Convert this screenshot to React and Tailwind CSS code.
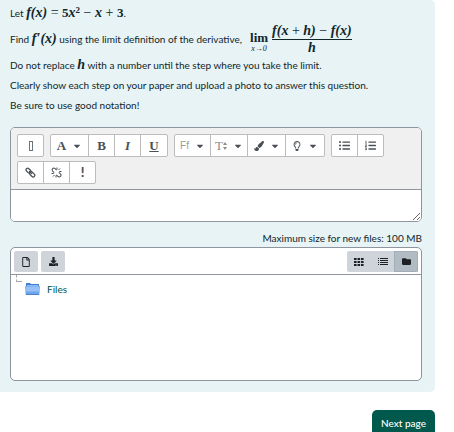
import React from 'react';
import { clsx } from 'clsx';
import {
  FaCaretDown,
  FaDownload,
  FaFolder,
  FaListOl,
  FaListUl,
  FaPaintBrush,
  FaRegFile,
  FaRegLightbulb,
} from 'react-icons/fa';

const Tex = ({ children, className }) => (
  <span
    className={clsx(
      "font-['Liberation_Serif',serif] whitespace-nowrap text-[#10262b]",
      className || 'text-[14px] leading-4 font-bold italic'
    )}
  >
    {children}
  </span>
);

const Up = ({ children }) => (
  <span className="not-italic font-normal">{children}</span>
);

const Group = ({ children }) => (
  <div className="flex h-[23px] rounded-xs border border-[#bcbcbc] bg-white divide-x divide-[#bcbcbc] overflow-hidden">
    {children}
  </div>
);

const Tool = ({ label, menu, className, children }) => (
  <button
    type="button"
    aria-label={label}
    className={clsx(
      'flex items-center justify-center gap-1.5 text-[#495057]',
      className || 'w-[26px]'
    )}
  >
    {children}
    {menu && <FaCaretDown size={10} />}
  </button>
);

const Letter = ({ children, className }) => (
  <span
    className={clsx(
      "font-['Liberation_Serif',serif] text-[13px] leading-4",
      className
    )}
  >
    {children}
  </span>
);

const ChainIcon = () => (
  <svg
    width="11"
    height="11"
    viewBox="0 0 22 22"
    fill="none"
    stroke="currentColor"
    strokeWidth="2.5"
    aria-hidden="true"
  >
    <g transform="rotate(45 11 11)">
      <rect x="0" y="8" width="11" height="6.500" rx="3.250" />
      <rect x="10" y="8" width="12" height="6.500" rx="3.250" />
      <path d="M7 11h8" />
    </g>
  </svg>
);

const BrokenChainIcon = () => (
  <svg
    width="11"
    height="11"
    viewBox="0 0 22 22"
    fill="none"
    stroke="currentColor"
    strokeWidth="2"
    aria-hidden="true"
  >
    <g transform="rotate(45 11 11)">
      <path d="M8 7.500H3.500a3.500 3.500 0 0 0 0 7H8M14 7.500h4.500a3.500 3.500 0 0 1 0 7H14" />
    </g>
    <path d="M12 5V1M15 6l3-3M16.500 9H21M10 17v4M7 16l-3 3M5.500 13H1" />
  </svg>
);

const GridIcon = () => (
  <svg width="10" height="8" viewBox="0 0 10 8" fill="currentColor">
    <path d="M0 0h2.600v2H0zM3.500 0h2.600v2H3.500zM7 0h2.600v2H7zM0 3h2.600v2H0zM3.500 3h2.600v2H3.500zM7 3h2.600v2H7zM0 6h2.600v2H0zM3.500 6h2.600v2H3.500zM7 6h2.600v2H7z" />
  </svg>
);

const RowsIcon = () => (
  <svg width="10" height="8" viewBox="0 0 10 8" fill="currentColor">
    <path d="M0 0h1v1H0zM2 0h8v1H2zM0 2h1v1H0zM2 2h8v1H2zM0 4h1v1H0zM2 4h8v1H2zM0 6h1v1H0zM2 6h8v1H2z" />
  </svg>
);

const FolderIcon = () => (
  <svg width="15" height="14" viewBox="0 0 15 14" aria-hidden="true">
    <path d="M1 5V1.500Q1 1 1.500 1H5l1 1h7.500l.5.500V5z" fill="#3f7ed0" />
    <path d="M2 3h11v2H2z" fill="#8fbdf2" />
    <path d="M0 4h15l-.700 9H.700z" fill="#6ea6ec" />
    <path d="M.500 4.500h14l-.400 5H.900z" fill="#98c2f7" />
    <path d="M1 12.500h13" stroke="#4b83cd" />
  </svg>
);

const Question = () => (
  <div className="text-[10px] leading-5 text-[#10262b]">
    <p>
      Let{' '}
      <Tex>
        f(x) <Up>=</Up> <span className="not-italic text-[13px]">5</span>x
        <sup className="not-italic text-[9px] leading-none">2</sup> <Up>−</Up> x{' '}
        <Up>+</Up> <span className="not-italic text-[13px]">3</span>
      </Tex>
      .
    </p>
    <div className="flex h-8 items-center whitespace-nowrap">
      <span>
        Find <Tex>f′(x)</Tex> using the limit definition of the derivative,
      </span>
      <span className="ml-2 mt-2 flex flex-col items-center">
        <Tex className="text-[13px] leading-3 font-bold">lim</Tex>
        <Tex className="text-[8px] leading-[10px] italic">x→0</Tex>
      </span>
      <span className="ml-1 flex flex-col items-center">
        <Tex className="border-b border-[#10262b] text-[14px] leading-4 font-bold italic">
          f(x <Up>+</Up> h) <Up>−</Up> f(x)
        </Tex>
        <Tex className="text-[14px] leading-[15px] font-bold italic">h</Tex>
      </span>
    </div>
    <p>
      Do not replace <Tex>h</Tex> with a number until the step where you take
      the limit.
    </p>
    <p>
      Clearly show each step on your paper and upload a photo to answer this
      question.
    </p>
    <p>Be sure to use good notation!</p>
  </div>
);

const Editor = () => (
  <div className="mt-3 overflow-hidden rounded-[5px] border border-[#8f959e] bg-white">
    <div className="flex flex-wrap gap-x-1.5 gap-y-1 border-b border-[#8f959e] bg-[#f0f0f0] px-1.5 pt-1.5 pb-[5px]">
      <Group>
        <Tool label="Show more buttons" className="w-[25px]">
          <span className="h-2.5 w-1 border border-[#6c757d]" />
        </Tool>
      </Group>
      <Group>
        <Tool label="Paragraph styles" menu className="w-[38px]">
          <Letter className="font-bold">A</Letter>
        </Tool>
        <Tool label="Bold">
          <Letter className="font-bold">B</Letter>
        </Tool>
        <Tool label="Italic">
          <Letter className="font-bold italic">I</Letter>
        </Tool>
        <Tool label="Underline">
          <Letter className="font-bold underline">U</Letter>
        </Tool>
      </Group>
      <Group>
        <Tool label="Font family" menu className="w-9">
          <span className="font-['Liberation_Sans',sans-serif] text-[10px] text-[#9a9a9a]">
            Ff
          </span>
        </Tool>
        <Tool label="Font size" menu className="w-[37px]">
          <span className="flex items-center text-[#8c8c8c]">
            <Letter>T</Letter>
            <svg width="4" height="10" viewBox="0 0 4 10" fill="currentColor">
              <path d="M2 1l2 3H0zM2 9l2-3H0z" />
            </svg>
          </span>
        </Tool>
        <Tool label="Font colour" menu className="w-[38px]">
          <FaPaintBrush size={10} />
        </Tool>
        <Tool label="Background colour" menu className="w-[38px]">
          <FaRegLightbulb size={10} />
        </Tool>
      </Group>
      <Group>
        <Tool label="Unordered list">
          <FaListUl size={11} />
        </Tool>
        <Tool label="Ordered list" className="w-[25px]">
          <FaListOl size={11} />
        </Tool>
      </Group>
      <Group>
        <Tool label="Link">
          <ChainIcon />
        </Tool>
        <Tool label="Unlink">
          <BrokenChainIcon />
        </Tool>
        <Tool label="Prevent automatic linking" className="w-[25px]">
          <span className="text-[13px] font-black">!</span>
        </Tool>
      </Group>
    </div>
    <textarea
      aria-label="Answer text"
      className="block h-[31px] w-full resize-y bg-white px-1.5 text-[10px] outline-none"
    />
  </div>
);

const FileManager = () => (
  <div className="overflow-hidden rounded-[5px] border border-[#8f959e] bg-white">
    <div className="flex justify-between border-b border-[#8f959e] px-[3px] pt-[3px] pb-0.5 text-[#1d2125]">
      <div className="flex gap-[3px]">
        <button
          type="button"
          aria-label="Add file"
          className="flex h-[21px] w-6 items-center justify-center rounded-xs bg-[#ced4da]"
        >
          <FaRegFile size={10} />
        </button>
        <button
          type="button"
          aria-label="Download all"
          className="flex h-[21px] w-6 items-center justify-center rounded-xs bg-[#ced4da]"
        >
          <FaDownload size={9} />
        </button>
      </div>
      <div className="flex overflow-hidden rounded-xs bg-[#ced4da]">
        <button
          type="button"
          aria-label="Icons view"
          className="flex w-6 items-center justify-center"
        >
          <GridIcon />
        </button>
        <button
          type="button"
          aria-label="Details view"
          className="flex w-[23px] items-center justify-center"
        >
          <RowsIcon />
        </button>
        <button
          type="button"
          aria-label="Tree view"
          className="flex w-6 items-center justify-center border border-[#a3adb8] bg-[#b1bbc4]"
        >
          <FaFolder size={9} />
        </button>
      </div>
    </div>
    <div className="flex h-[105px] items-start pl-[5px]">
      <span className="h-[7px] w-1.5 border-b border-l border-dashed border-[#aaa]" />
      <a
        href="#files"
        className="ml-[3px] flex items-center gap-[7px] pt-1 text-[10px] leading-5 text-[#01524a]"
      >
        <FolderIcon />
        Files
      </a>
    </div>
  </div>
);

const App = () => (
  <div className="h-screen overflow-hidden bg-white pr-[19px] font-['Lato',sans-serif]">
    <main className="rounded-r-[5px] bg-[#e7f3f5] pt-[3px] pr-[13px] pb-[11px] pl-2.5">
      <Question />
      <Editor />
      <p className="mt-2 text-right text-[10px] leading-[17px] text-[#10262b]">
        Maximum size for new files: 100 MB
      </p>
      <FileManager />
    </main>
    <div className="mt-[18px] flex justify-end">
      <button
        type="button"
        className="h-[26px] rounded-[5px] bg-[#00594c] px-[9px] text-[10px] font-medium text-white"
      >
        Next page
      </button>
    </div>
  </div>
);

export default App;
